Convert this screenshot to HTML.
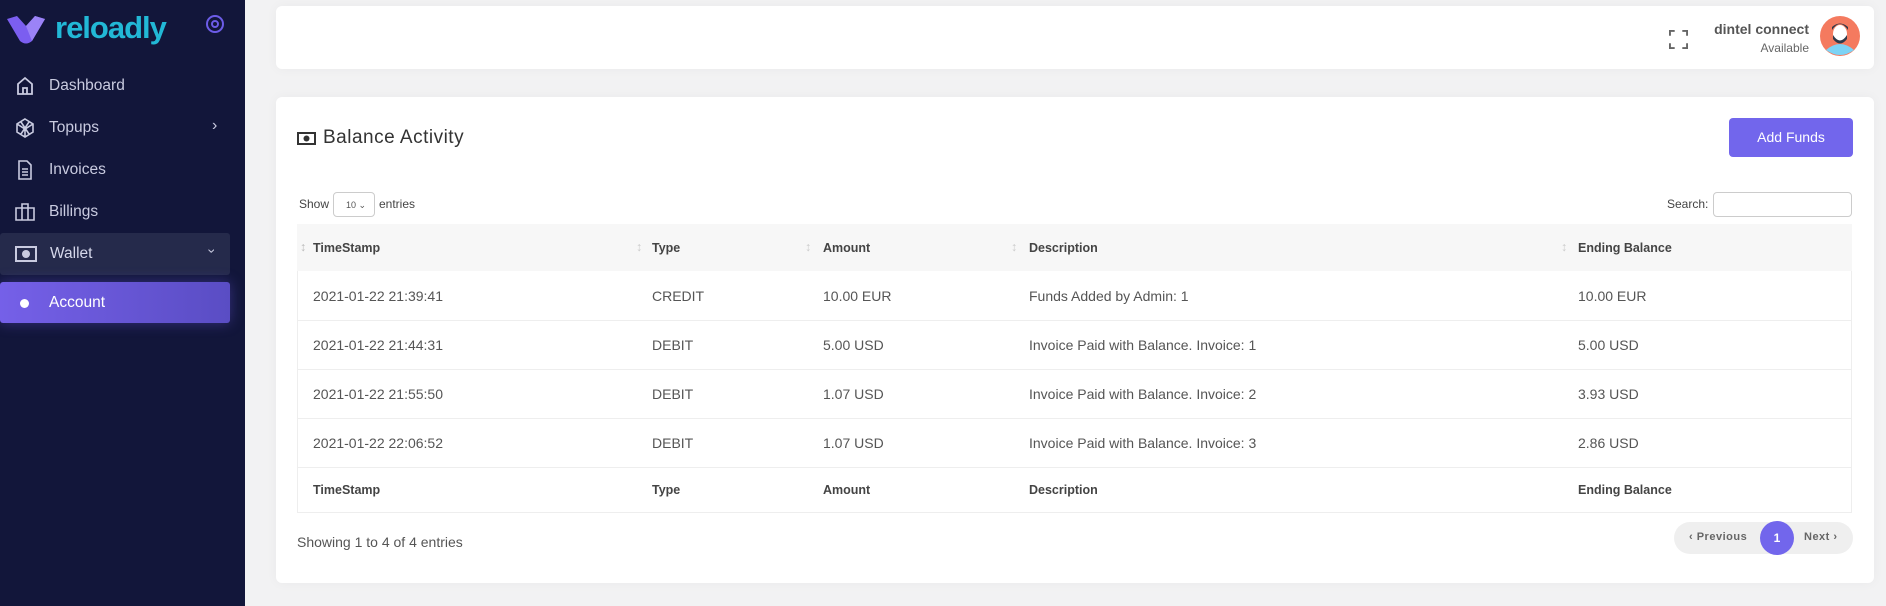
<!DOCTYPE html>
<html><head><meta charset="utf-8"><style>
*{box-sizing:border-box;margin:0;padding:0}
body{width:1886px;height:606px;overflow:hidden;background:#f2f2f3;font-family:"Liberation Sans",Arial,sans-serif;position:relative;color:#555}
.sb{position:absolute;left:0;top:0;width:245px;height:606px;background:#12163a}
.logo{position:absolute;left:55px;top:10px;font-size:31px;font-weight:bold;color:#22b8d6;letter-spacing:-1px}
.nav{position:absolute;left:49px;font-size:15.5px;color:#c9cbe0}
.ic{position:absolute;left:15px;width:20px;height:20px}
.card{position:absolute;background:#fff;border-radius:6px;box-shadow:0 0 12px rgba(0,0,0,.04)}
.abs{position:absolute}
.th{position:absolute;font-size:12.5px;font-weight:bold;color:#444}
.td{position:absolute;font-size:14px;color:#555}
</style></head><body>
<div class="sb">
 <svg class="abs" style="left:7px;top:16px" width="38" height="28" viewBox="0 0 38 28"><path d="M0 3 L10 0 L19 10 L28 0 L38 3 L25 25 Q19 30 13 25 Z" fill="#7b5ef0"/><path d="M19 10 L28 0 L38 3 L25 25 Z" fill="#9b83f7"/></svg>
 <div class="logo">reloadly</div>
 <svg class="abs" style="left:205px;top:14px" width="20" height="20"><circle cx="10" cy="10" r="8" fill="none" stroke="#6c5ce7" stroke-width="2"/><circle cx="10" cy="10" r="3" fill="none" stroke="#6c5ce7" stroke-width="2"/></svg>
 <svg class="ic" style="top:76px" viewBox="0 0 20 20"><path d="M3 18V8L10 2l7 6v10zM8 18v-6h4v6" fill="none" stroke="#c9cbe0" stroke-width="1.8"/></svg>
 <div class="nav" style="top:77px">Dashboard</div>
 <svg class="ic" style="top:118px" viewBox="0 0 20 20"><path d="M10 1l8 5v8l-8 5-8-5V6zM2 6l8 5 8-5M10 11v8M6 4l8 12M14 4L6 16" fill="none" stroke="#c9cbe0" stroke-width="1.6"/></svg>
 <div class="nav" style="top:119px">Topups</div>
 <div class="abs" style="left:212px;top:117px;color:#c9cbe0;font-size:16px">›</div>
 <svg class="ic" style="top:160px" viewBox="0 0 20 20"><path d="M4 1h8l4 4v14H4zM7 9h6M7 12h6M7 15h6" fill="none" stroke="#c9cbe0" stroke-width="1.6"/></svg>
 <div class="nav" style="top:161px">Invoices</div>
 <svg class="ic" style="top:202px" viewBox="0 0 20 20"><path d="M1 6h18v12H1zM7 6V2h6v4M7 6v12M13 6v12" fill="none" stroke="#c9cbe0" stroke-width="1.6"/></svg>
 <div class="nav" style="top:203px">Billings</div>
 <div class="abs" style="left:0;top:233px;width:230px;height:42px;background:#252a4b;border-radius:3px"></div>
 <svg class="abs" style="left:15px;top:246px" width="22" height="16" viewBox="0 0 22 16"><rect x="1" y="1" width="20" height="14" fill="none" stroke="#c9cbe0" stroke-width="2"/><circle cx="11" cy="8" r="4" fill="#c9cbe0"/></svg>
 <div class="nav" style="left:50px;top:245px;color:#d5d7ea">Wallet</div>
 <div class="abs" style="left:210px;top:243px;color:#c9cbe0;font-size:14px;transform:rotate(90deg)">›</div>
 <div class="abs" style="left:0;top:282px;width:230px;height:41px;background:linear-gradient(90deg,#7560e8,#5a4dc4);border-radius:3px;box-shadow:0 0 14px rgba(110,90,230,.4)"></div>
 <div class="abs" style="left:20px;top:299px;width:9px;height:9px;border-radius:50%;background:#fff"></div>
 <div class="nav" style="top:294px;color:#fff">Account</div>
</div>

<div class="card" style="left:276px;top:6px;width:1598px;height:63px">
 <svg class="abs" style="left:1393px;top:24px" width="19" height="19" viewBox="0 0 20 20"><path d="M1 6V1h5M14 1h5v5M19 14v5h-5M6 19H1v-5" fill="none" stroke="#666" stroke-width="2"/></svg>
 <div class="abs" style="right:65px;top:15px;font-size:14px;font-weight:bold;color:#555">dintel connect</div>
 <div class="abs" style="right:65px;top:35px;font-size:12px;color:#666">Available</div>
 <svg class="abs" style="left:1544px;top:10px" width="40" height="40" viewBox="0 0 40 40"><circle cx="20" cy="20" r="20" fill="#f47a5f"/><path d="M6 34Q20 22 34 34Q20 44 6 34" fill="#7dd3f5"/><ellipse cx="20" cy="18" rx="7" ry="9" fill="#fff"/><path d="M12 14Q20 2 28 14V11Q20 4 12 11Z" fill="#2f3a4a"/><path d="M13 19Q20 30 27 19V23Q20 32 13 23Z" fill="#2f3a4a"/></svg>
</div>

<div class="card" style="left:276px;top:97px;width:1598px;height:486px">
 <svg class="abs" style="left:21px;top:35px" width="19" height="13" viewBox="0 0 19 13"><rect x="1" y="1" width="17" height="11" fill="none" stroke="#333" stroke-width="2"/><circle cx="9.5" cy="6.5" r="3" fill="#333"/></svg>
 <div class="abs" style="left:47px;top:30px;font-size:19px;color:#333;letter-spacing:.5px">Balance Activity</div>
 <div class="abs" style="left:1453px;top:21px;width:124px;height:39px;background:#7266ec;border-radius:4px;color:#fff;font-size:14px;text-align:center;line-height:39px">Add Funds</div>
 <div class="abs" style="left:23px;top:100px;font-size:12px;color:#444">Show</div>
 <div class="abs" style="left:57px;top:95px;width:42px;height:25px;border:1px solid #ccc;border-radius:4px;font-size:9px;padding:7px 0 0 12px;color:#555">10 ⌄</div>
 <div class="abs" style="left:103px;top:100px;font-size:12px;color:#444">entries</div>
 <div class="abs" style="left:1391px;top:100px;font-size:12px;color:#444">Search:</div>
 <div class="abs" style="left:1437px;top:95px;width:139px;height:25px;border:1px solid #ccc;border-radius:4px"></div>
 <div class="abs" style="left:21px;top:127px;width:1555px;height:289px;border:1px solid #eee;border-top:none"></div>
 <div class="abs" style="left:21px;top:127px;width:1555px;height:47px;background:#f7f7f7"></div>
 <div class="abs" style="left:22px;top:223px;width:1553px;height:1px;background:#eee"></div>
 <div class="abs" style="left:22px;top:272px;width:1553px;height:1px;background:#eee"></div>
 <div class="abs" style="left:22px;top:321px;width:1553px;height:1px;background:#eee"></div>
 <div class="abs" style="left:22px;top:370px;width:1553px;height:1px;background:#eee"></div>
 <div class="th" style="left:24px;top:143px;color:#bbb;font-weight:normal">↕</div>
 <div class="th" style="left:360px;top:143px;color:#ccc;font-weight:normal">↕</div>
 <div class="th" style="left:529px;top:143px;color:#ccc;font-weight:normal">↕</div>
 <div class="th" style="left:735px;top:143px;color:#ccc;font-weight:normal">↕</div>
 <div class="th" style="left:1285px;top:143px;color:#ccc;font-weight:normal">↕</div>
 <div class="th" style="left:37px;top:144px">TimeStamp</div><div class="th" style="left:376px;top:144px">Type</div><div class="th" style="left:547px;top:144px">Amount</div><div class="th" style="left:753px;top:144px">Description</div><div class="th" style="left:1302px;top:144px">Ending Balance</div>
 <div class="td" style="left:37px;top:191px">2021-01-22 21:39:41</div><div class="td" style="left:376px;top:191px">CREDIT</div><div class="td" style="left:547px;top:191px">10.00 EUR</div><div class="td" style="left:753px;top:191px">Funds Added by Admin: 1</div><div class="td" style="left:1302px;top:191px">10.00 EUR</div>
 <div class="td" style="left:37px;top:240px">2021-01-22 21:44:31</div><div class="td" style="left:376px;top:240px">DEBIT</div><div class="td" style="left:547px;top:240px">5.00 USD</div><div class="td" style="left:753px;top:240px">Invoice Paid with Balance. Invoice: 1</div><div class="td" style="left:1302px;top:240px">5.00 USD</div>
 <div class="td" style="left:37px;top:289px">2021-01-22 21:55:50</div><div class="td" style="left:376px;top:289px">DEBIT</div><div class="td" style="left:547px;top:289px">1.07 USD</div><div class="td" style="left:753px;top:289px">Invoice Paid with Balance. Invoice: 2</div><div class="td" style="left:1302px;top:289px">3.93 USD</div>
 <div class="td" style="left:37px;top:338px">2021-01-22 22:06:52</div><div class="td" style="left:376px;top:338px">DEBIT</div><div class="td" style="left:547px;top:338px">1.07 USD</div><div class="td" style="left:753px;top:338px">Invoice Paid with Balance. Invoice: 3</div><div class="td" style="left:1302px;top:338px">2.86 USD</div>
 <div class="th" style="left:37px;top:386px">TimeStamp</div><div class="th" style="left:376px;top:386px">Type</div><div class="th" style="left:547px;top:386px">Amount</div><div class="th" style="left:753px;top:386px">Description</div><div class="th" style="left:1302px;top:386px">Ending Balance</div>
 <div class="abs" style="left:21px;top:437px;font-size:14px;color:#555">Showing 1 to 4 of 4 entries</div>
 <div class="abs" style="left:1398px;top:425px;width:179px;height:32px;background:#efefef;border-radius:16px"></div>
 <div class="abs" style="left:1413px;top:434px;font-size:11px;font-weight:bold;color:#666;letter-spacing:.5px">‹ Previous</div>
 <div class="abs" style="left:1484px;top:424px;width:34px;height:34px;border-radius:50%;background:#7266ec;color:#fff;font-size:12px;font-weight:bold;text-align:center;line-height:34px">1</div>
 <div class="abs" style="left:1528px;top:434px;font-size:11px;font-weight:bold;color:#666;letter-spacing:.5px">Next ›</div>
</div>
</body></html>
